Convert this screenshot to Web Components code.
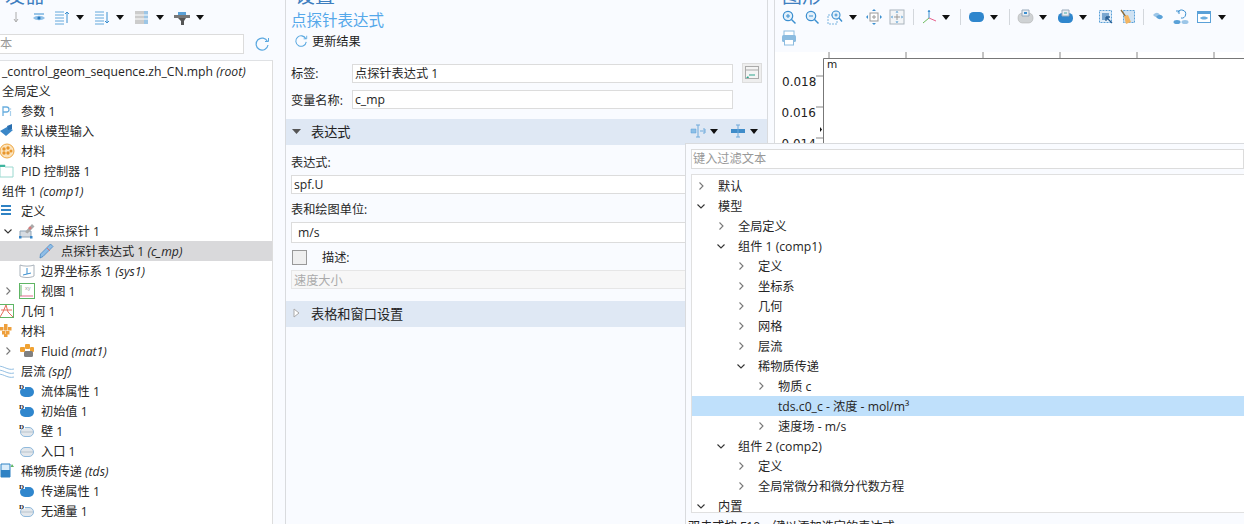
<!DOCTYPE html>
<html><head><meta charset="utf-8">
<style>
html,body{margin:0;padding:0;width:1244px;height:524px;overflow:hidden;background:#fff}
body{font:12.2px "Open Sans","Noto Sans CJK SC",sans-serif;color:#262626}
</style></head><body>
<app-shell></app-shell>
<script>
const I={
 down:'<path d="M8 3v9M6 10l2 3 2-3" stroke="#aaa" fill="none"/>',
 eye:'<path d="M3 5h10" stroke="#3b8fd0"/><path d="M2 9c3-3 9-3 12 0-3 3-9 3-12 0z" fill="#8fc0e8"/><circle cx="8" cy="9" r="1.600" fill="#2a78bb"/>',
 listup:'<path d="M1 3h9M1 6h9M1 9h9M1 12h9M1 15h9" stroke="#62a8dc"/><path d="M13 14V3M11 5l2-2 2 2" stroke="#3b8fd0" fill="none"/>',
 listdn:'<path d="M1 3h9M1 6h9M1 9h9M1 12h9M1 15h9" stroke="#62a8dc"/><path d="M13 3v11M11 12l2 2 2-2" stroke="#3b8fd0" fill="none"/>',
 cols:'<path d="M1 2h9v13H1z" fill="#ccc"/><path d="M10 2h4v13h-4z" fill="#9dc6e6"/><path d="M1 6h13M1 10h13" stroke="#fff"/>',
 filter:'<path d="M0 6h16v3H0z" fill="#777"/><path d="M4 3h8v3H4z" fill="#5aa1d8"/><path d="M4 9h8l-2 3v4H7v-4z" fill="#555"/>',
 refresh:'<path d="M13.500 5.500A6 6 0 1 0 14 9" fill="none" stroke="#5aa8e0" stroke-width="1.200"/><path d="M11 5.500h3.500V2" fill="none" stroke="#5aa8e0"/>',
 pi:'<path d="M4 13V4h3.500a2.500 2.500 0 0 1 0 5H4" fill="none" stroke="#6aaedf" stroke-width="1.300"/><path d="M11.500 8v5" stroke="#a8cfec" stroke-width="1.200"/><circle cx="11.500" cy="6" r=".8" fill="#a8cfec"/>',
 model:'<path d="M1 8l7-4 6 3-7 6z" fill="#3b87c8"/><path d="M8 3l5-2v5l-4 1z" fill="#2a6fb0"/>',
 mat:'<circle cx="8" cy="8" r="7" fill="#fbe3bd" stroke="#f0a842"/><g fill="#e8962c"><circle cx="5" cy="6" r="1.700"/><circle cx="9" cy="5" r="1.700"/><circle cx="5" cy="10" r="1.700"/><circle cx="9" cy="10" r="1.700"/><circle cx="12" cy="8" r="1.500"/></g>',
 pid:'<path d="M1 2h5v2h8v10H1z" fill="#fff" stroke="#9ad8cf"/><path d="M1 2h5v2H1z" fill="#3fb59f"/>',
 defs:'<path d="M2 3h10M2 7h10M2 11h10" stroke="#2f82c4" stroke-width="2"/>',
 probe:'<path d="M1 8h11v6H1z" fill="#d7dce2" stroke="#8fa3b5"/><path d="M6 9l7-8 2.500 2.500-7 7z" fill="#aaa"/><circle cx="11" cy="5" r="1.500" fill="#d97a7a"/><g fill="#3b87c8"><rect y="13" width="2.500" height="2.500"/><rect x="11" y="13" width="2.500" height="2.500"/></g>',
 expr:'<path d="M1 15l3-1.500 10-10-2.500-2.500-10 10z" fill="#8fbde6" stroke="#3a7fc0" stroke-width=".7"/><path d="M8 5l3 3" stroke="#d97a7a"/>',
 sys:'<path d="M1 2c3 1.500 11 1.500 14 0v11c-3 2-11 2-14 0z" fill="#fff" stroke="#a9b2bb"/><path d="M8 5v6M8 11l-4 1M8 11l4-1" stroke="#3b8fd0"/>',
 view:'<rect x=".5" y=".5" width="15" height="15" fill="#fff" stroke="#5fb565"/><text x="6" y="7" font-size="5.500" fill="#999" font-family="Liberation Sans">xy</text><path d="M1 13h13" stroke="#e36a8e"/><path d="M2 13V2" stroke="#5fb565"/>',
 geom:'<rect x=".5" y="1.500" width="14" height="13" fill="#fff" stroke="#5fb565"/><path d="M1 14l3-5 3-7 2 7 5 5M2 7h11" fill="none" stroke="#e46f5d"/>',
 matsm:'<g fill="#ee9f3b"><rect x="1" y="4" width="3.500" height="3.500"/><rect x="5" y="4" width="3.500" height="3.500"/><rect x="9" y="4" width="3.500" height="3.500"/><rect x="3" y="8" width="3.500" height="3.500"/><rect x="7" y="8" width="3.500" height="3.500"/><rect x="5" y="1" width="3.500" height="3"/><rect x="5" y="11" width="3.500" height="3"/></g>',
 fluid:'<g fill="#f0a233"><rect x="1" y="4" width="5" height="5" rx="1"/><rect x="6" y="1" width="5" height="5" rx="1"/><rect x="11" y="4" width="4" height="5" rx="1"/></g><rect x="5" y="8" width="9" height="6" rx="1.500" fill="#808080"/>',
 flow:'<path d="M-2 4c5-3 10 4 17 2M-2 8c5-3 10 4 17 2M-2 12c5-3 10 4 17 2" fill="none" stroke="#93bfe2"/>',
 dblue:'<rect x="1" y="4" width="14" height="10" rx="5" fill="#2f86cd"/><rect x="0" y="0" width="6" height="6" fill="#fff"/><text x="0" y="6" font-size="7" font-weight="700" fill="#222" font-family="Liberation Serif">D</text>',
 dpale:'<rect x="1.500" y="4.500" width="13" height="9" rx="4.500" fill="#e2e7ec" stroke="#8fb9dc"/><path d="M2 9h12" stroke="#b8c3cc"/><rect x="0" y="0" width="6" height="6" fill="#fff"/><text x="0" y="6" font-size="7" font-weight="700" fill="#222" font-family="Liberation Serif">D</text>',
 pale:'<rect x="1.500" y="4.500" width="13" height="9" rx="4.500" fill="#e2e7ec" stroke="#8fb9dc"/><path d="M2 9h12" stroke="#b8c3cc"/>',
 tds:'<path d="M2 1h9v13H2z" fill="#d9ecfa" stroke="#2f82c4"/><path d="M2 7h9v7H2z" fill="#2f82c4"/><circle cx="0" cy="14" r="1.200" fill="#f0a233"/><path d="M13 1l2 3h-3.500z" fill="#5fb565"/>',
 form:'<rect x="1.500" y="1.500" width="13" height="12" fill="#f4f4f4" stroke="#aaa"/><path d="M2 5h12" stroke="#aaa"/><path d="M5 10h6" stroke="#2ca58d"/><path d="M2 13l2-2 1 2z" fill="#2ca58d"/>',
 zin:'<circle cx="7" cy="7" r="4.700" fill="#e4f1fb" stroke="#3b8fd0" stroke-width="1.200"/><path d="M5 7h4M7 5v4" stroke="#3b8fd0"/><path d="M10.500 10.500l4 4" stroke="#3b8fd0" stroke-width="1.500"/>',
 zout:'<circle cx="7" cy="7" r="4.700" fill="#e4f1fb" stroke="#3b8fd0" stroke-width="1.200"/><path d="M5 7h4" stroke="#3b8fd0"/><path d="M10.500 10.500l4 4" stroke="#3b8fd0" stroke-width="1.500"/>',
 zbox:'<path d="M1 6h9v9H1z" fill="none" stroke="#7db5e0" stroke-dasharray="2 1"/><circle cx="9" cy="6" r="4" fill="#e4f1fb" stroke="#3b8fd0" stroke-width="1.100"/><path d="M7.500 6h3M9 4.500v3" stroke="#3b8fd0"/><path d="M12 9l3 3.500" stroke="#3b8fd0" stroke-width="1.400"/>',
 zall:'<rect x="4" y="4" width="8" height="8" fill="#fff" stroke="#999"/><path d="M6 8h4M8 6v4" stroke="#999"/><path d="M8 0l-2 2h4zM8 16l-2-2h4zM0 8l2-2v4zM16 8l-2-2v4z" fill="#3b8fd0"/>',
 zext:'<rect x="1" y="1" width="14" height="14" fill="#f3f5f7" stroke="#aab4bd"/><path d="M5 8h6M8 5v6" stroke="#999"/><path d="M8 2l-1.500 1.500h3zM8 14l-1.500-1.500h3zM2 8l1.500-1.500v3zM14 8l-1.500-1.500v3z" fill="#3b8fd0"/>',
 axes:'<path d="M8 9V1" stroke="#3b8fd0"/><path d="M8 9l7 3" stroke="#e8608c"/><path d="M8 9l-6 5" stroke="#6dbb5e"/><path d="M6.500 3L8 1l1.500 2z" fill="#3b8fd0"/>',
 pill:'<rect x="1" y="3" width="15" height="10" rx="4.500" fill="#2f86cd"/>',
 pillg:'<rect x="1" y="4" width="15" height="10" rx="4.500" fill="#cfd2d4" stroke="#aaa" stroke-width=".5"/><path d="M5 1h7v6H5z" fill="#e8edf2" stroke="#9ab"/><path d="M7 3h3v2H7z" fill="#3b8fd0"/>',
 pillb:'<rect x="1" y="4" width="15" height="10" rx="4.500" fill="#2f86cd"/><path d="M5 1h7v6H5z" fill="#e8edf2" stroke="#9ab"/><path d="M7 3h3v2H7z" fill="#9cc"/>',
 sel:'<rect x="1.500" y="1.500" width="12" height="12" fill="#e3eef8" stroke="#5aa1d8" stroke-dasharray="2 1"/><rect x="4" y="4" width="7" height="7" fill="#7aa7d0"/><path d="M8 8l6 6M8 8v4M8 8h4" stroke="#2a5f93" stroke-width="1.300"/>',
 clr:'<rect x="3.500" y="1.500" width="11" height="12" fill="#cfe2f3" stroke="#5aa1d8" stroke-dasharray="2 1"/><path d="M1 1l5 7" stroke="#8a6b3a" stroke-width="1.300"/><path d="M4 7l4-1 3 7-5 2z" fill="#f3b562"/>',
 eyes:'<path d="M3 6c3-3 5-3 7 0-2 3-4 3-7 0z" fill="#9cc6e8"/><path d="M6 8c3-3 5-3 7 0-2 3-4 3-7 0z" fill="#5aa1d8"/>',
 reset:'<path d="M5 3.500A4 4 0 1 1 8 9" fill="none" stroke="#3b8fd0"/><path d="M3 2h3v3" fill="none" stroke="#3b8fd0"/><ellipse cx="4" cy="13" rx="3.500" ry="2" fill="#5aa1d8"/><ellipse cx="12" cy="13" rx="3.500" ry="2" fill="#9cc6e8"/>',
 win:'<rect x="1.500" y="2.500" width="13" height="11" fill="#fff" stroke="#5aa1d8"/><path d="M2 4h12" stroke="#5aa1d8" stroke-width="2"/><path d="M4 9c2-2 6-2 8 0-2 2-6 2-8 0z" fill="#6badde"/>',
 print:'<rect x="3" y="1" width="10" height="5" fill="#fff" stroke="#8cbce0"/><rect x="1" y="5" width="14" height="7" rx="1.500" fill="#8cbce0"/><rect x="3.500" y="9.500" width="9" height="5.500" fill="#fff" stroke="#8cbce0"/>',
 sizeA:'<path d="M1 6h5v4H1z" fill="#8dbfe6" stroke="#5aa1d8" stroke-width=".5"/><path d="M10 8h5M13 6h2v4h-2" fill="none" stroke="#6eaadb"/><path d="M8 2v12M6 2h4M6 14h4" stroke="#6eaadb"/>',
 sizeB:'<path d="M1 6h14v4H1z" fill="#3f8cc9"/><path d="M8 2v12M6 2h4M6 14h4" stroke="#6eaadb"/>'
};
function def(name,css,html){customElements.define(name,class extends HTMLElement{
 constructor(){super();this.attachShadow({mode:'open'});}
 connectedCallback(){this.shadowRoot.innerHTML='<style>'+css+'</style>'+(typeof html=='function'?html(this):html);}
});}
def('ui-icon',':host{display:inline-flex;flex:none;width:16px;height:16px}svg{width:100%;height:100%;display:block;overflow:visible}',
 h=>`<svg viewBox="0 0 16 16">${I[h.getAttribute('n')]||''}</svg>`);
def('caret-mark',':host{display:inline-block;flex:none;width:0;height:0;border:4.500px solid transparent;border-top:5px solid #111;border-bottom:0}','');
def('tool-bar',':host{display:flex;align-items:center}','<slot></slot>');
def('tool-item',':host{display:inline-flex;align-items:center;flex:none;gap:var(--cg,6px);margin-right:var(--mr,10px)}',
 h=>`<ui-icon n="${h.getAttribute('n')}"></ui-icon>${h.hasAttribute('c')?'<caret-mark></caret-mark>':''}`);
def('tool-sep',':host{display:inline-block;flex:none;width:1px;height:16px;background:#d3d7dc;margin-left:var(--ml,8px);margin-right:var(--sr,7px)}','');
def('tree-row',`:host{display:flex;align-items:center;height:20px;white-space:nowrap;color:inherit}
:host([sel]){background:var(--selbg,#d9d9db)}
.tw{width:20px;flex:none;display:flex;justify-content:center;margin-right:var(--tg,0px)}
.ic{width:23px;box-sizing:border-box;padding-left:1px;flex:none;display:flex}
svg{width:8px;height:8px}`,
 h=>{const l=+h.getAttribute('l')||0,t=h.getAttribute('t'),n=h.getAttribute('n'),off=parseFloat(h.getAttribute('o')||getComputedStyle(h).getPropertyValue('--off'))||0;
 const tw=t?`<svg viewBox="0 0 8 8"><path d="${t=='o'?'M0.500 2.500L4 6l3.500-3.500':'M2.500 0.500L6 4 2.500 7.500'}" fill="none" stroke="${t=='o'?'#333':'#777'}" stroke-width="1.100"/></svg>`:'';
 return `<span style="width:0;margin-left:${l*20+off}px;flex:none"></span><span class="tw">${tw}</span>${n?`<span class="ic"><ui-icon n="${n}"></ui-icon></span>`:''}<span><slot></slot></span>`;});
def('text-field',`:host{display:block;box-sizing:border-box;height:var(--h,19px);background:#fff;border:1px solid #dcdcdc;padding-left:var(--pl,2px);line-height:calc(var(--h,19px) - 2px);white-space:nowrap;overflow:hidden}
:host([dis]){background:#f7f7f7;color:#aaa;border-color:#e6e6e6;line-height:19px}`,'<slot></slot>');
def('section-bar',`:host{display:flex;align-items:center;box-sizing:border-box;height:26px;background:#dfe8f4;color:#222;font-size:13.200px;padding:0 0 2px 6px;flex:none}
.a{width:19px;flex:none;display:flex}
span.t{flex:1}`,
 h=>`<span class="a"><svg width="10" height="10" viewBox="0 0 10 10">${h.getAttribute('s')=='o'?'<path d="M0 3h9L4.500 8z" fill="#555"/>':'<path d="M2 1l5 4-5 4z" fill="#fff" stroke="#aaa"/>'}</svg></span><span class="t"><slot></slot></span><slot name="r"></slot>`);
const H='margin:-15px 0 0 0;font:400 20px "Noto Sans CJK SC",sans-serif;color:#3f7fbf;height:20px;line-height:20px;overflow:hidden;white-space:nowrap;flex:none;';
def('tree-panel',`:host{display:flex;flex-direction:column;width:273px;flex:none;background:#f9fbff;overflow:hidden}
h2{${H}padding-left:5px}
tool-bar{height:24px;padding-left:8px;flex:none}
.search{display:flex;align-items:center;height:20px;margin-top:5px;flex:none}
.search text-field{width:244px;border-left:0;--pl:0px;color:#999;--h:20px}
.search ui-icon{margin-left:10px}
.tree{flex:1;background:#fff;margin-top:6px;border-top:1px solid #dfe1e4;border-right:1px solid #ddd;--off:-18px}`,
 `<h2>发器</h2>
 <tool-bar><tool-item n="down" style="--mr:7px"></tool-item><tool-item n="eye" style="--mr:7px"></tool-item><tool-item n="listup" c></tool-item><tool-item n="listdn" c></tool-item><tool-item n="cols" c></tool-item><tool-item n="filter" c></tool-item></tool-bar>
 <div class="search"><text-field>本</text-field><ui-icon n="refresh"></ui-icon></div>
 <div class="tree"><slot></slot></div>`);
def('settings-panel',`:host{display:flex;flex-direction:column;width:483px;flex:none;background:#f9fbff;border-left:1px solid #d9dbde;border-right:1px solid #d9dbde;box-sizing:border-box;overflow:hidden}
h2{${H}padding-left:9px}
h3{margin:4px 0 0;padding-left:5px;font:400 15.500px "Noto Sans CJK SC",sans-serif;color:#55a8ea;height:20px;line-height:20px;flex:none}
.upd{display:flex;align-items:center;gap:4px;height:20px;margin-top:2px;padding-left:8px;color:#222;flex:none}
.upd ui-icon{width:14px;height:14px}
.r{display:grid;grid-template-columns:61px 381px 1fr;align-items:center;padding-left:5px;margin-top:7px;flex:none}
.r1{margin-top:12px}
.r ui-icon{margin-left:9px;width:20px;height:20px;background:#eee;border:1px solid #ddd;box-sizing:border-box;padding:1px}
.lab{padding-left:5px;height:20px;line-height:22px;flex:none}
.f{margin:3px 0 0 5px;--h:19px;flex:none}
.rt{display:flex;gap:12px;padding-right:9px;align-items:center}
.rt tool-item{--mr:0px;--cg:4px}
.cb{display:flex;align-items:center;padding-left:6px;height:20px;margin-top:4px;flex:none}
.cb span.b{width:13px;height:13px;background:#efefef;border:1px solid #999;margin-right:15px}`,
 `<h2>设置</h2><h3>点探针表达式</h3>
 <div class="upd"><ui-icon n="refresh"></ui-icon><span>更新结果</span></div>
 <div class="r r1"><span>标签:</span><text-field>点探针表达式 1</text-field><ui-icon n="form"></ui-icon></div>
 <div class="r"><span>变量名称:</span><text-field>c_mp</text-field></div>
 <section-bar s="o" style="margin-top:10px">表达式<span slot="r" class="rt"><tool-item n="sizeA" c></tool-item><tool-item n="sizeB" c></tool-item></span></section-bar>
 <div class="lab" style="margin-top:7px">表达式:</div>
 <text-field class="f">spf.U</text-field>
 <div class="lab" style="margin-top:5px">表和绘图单位:</div>
 <text-field class="f" style="--pl:6px;--h:21px">m/s</text-field>
 <div class="cb"><span class="b"></span><span>描述:</span></div>
 <text-field class="f" dis>速度大小</text-field>
 <section-bar s="c" style="margin-top:12px">表格和窗口设置</section-bar>
 <slot></slot>`);
def('plot-view',`:host{display:block;flex:1;background:#fff;overflow:hidden}svg{display:block}`,
 `<svg width="469" height="100" viewBox="775 52 469 100" font-family="DejaVu Sans" fill="#222">
 <path d="M829 52v6M906 52v6M983 52v6M1060 52v6M1137 52v6M1214 52v6M816 76h7M816 107h7M816 138h7" stroke="#888"/>
 <path d="M823.500 143V58.500H1244" fill="none" stroke="#777"/>
 <text x="827" y="68" font-size="10.500">m</text>
 <text x="782" y="86" font-size="12">0.018</text><text x="781.500" y="117" font-size="12">0.016</text><text x="781.500" y="148" font-size="12">0.014</text>
 <path d="M820 127v5l2-2.500z" fill="#111"/></svg>`);
def('graph-panel',`:host{display:flex;flex-direction:column;flex:1;min-width:0;border-left:1px solid #d9dbde;overflow:hidden}
h2{${H}padding-left:7px;background:#f9fbff}
.tb{background:#f9fbff;height:47px;padding-left:6px;flex:none}
.l{display:flex;align-items:center;height:24px;--mr:7px;white-space:nowrap;overflow:hidden}
.l2{height:18px}`,
 `<h2>图形</h2><div class="tb"><div class="l">
 <tool-item n="zin"></tool-item><tool-item n="zout"></tool-item><tool-item n="zbox" c style="--mr:9px"></tool-item><tool-item n="zall"></tool-item><tool-item n="zext" style="--mr:0px"></tool-item><tool-sep></tool-sep><tool-item n="axes" c style="--cg:5px;--mr:10px"></tool-item><tool-sep style="--ml:0px"></tool-sep><tool-item n="pill" c style="--mr:11px"></tool-item><tool-sep style="--ml:0px"></tool-sep><tool-item n="pillg" c style="--mr:10px"></tool-item><tool-item n="pillb" c style="--mr:11px"></tool-item><tool-item n="sel" style="--mr:6px"></tool-item><tool-item n="clr" style="--mr:0px"></tool-item><tool-sep style="--ml:7px;--sr:6px"></tool-sep><tool-item n="eyes"></tool-item><tool-item n="reset"></tool-item><tool-item n="win" c></tool-item></div>
 <div class="l l2"><tool-item n="print"></tool-item></div></div><plot-view></plot-view>`);
def('expr-popup',`:host{position:absolute;left:685px;top:143px;right:0;bottom:0;background:#f9fbff;border:1px solid #d9dbde;border-right:0;border-bottom:0;display:flex;flex-direction:column;box-sizing:border-box;overflow:hidden}
text-field{margin:5px 0 0 5px;--h:20px;--pl:1px;color:#999;flex:none}
.t{flex:none;height:339px;margin:5px 0 0 5px;padding-top:1px;background:#fff;border:1px solid #e0e0e0;border-right:0;box-sizing:border-box;--selbg:#bfe0fb;overflow:hidden;--off:-1px;--tg:7px}
.s{flex:none;height:14px;margin-top:7px;padding-left:2px;line-height:14px;white-space:nowrap;color:#222}
.s b{display:inline-block;width:33px;font-weight:400}`,
 `<text-field>键入过滤文本</text-field><div class="t"><slot></slot></div><div class="s">双击或按 <b>F10</b>键以添加选定的表达式</div>`);
def('app-shell',`:host{display:block;position:relative;width:1244px;height:524px;overflow:hidden}
.m{display:flex;width:100%;height:100%;align-items:stretch}
.g1{width:12px;flex:none;background:#f9fbff}
.g2{width:6px;flex:none;background:#f9fbff}`,
 `<div class="m"><tree-panel>
 <tree-row>_control_geom_sequence.zh_CN.mph <i>(root)</i></tree-row>
 <tree-row>全局定义</tree-row>
 <tree-row o="-22" n="pi">参数 1</tree-row>
 <tree-row o="-22" n="model">默认模型输入</tree-row>
 <tree-row o="-22" n="mat">材料</tree-row>
 <tree-row o="-22" n="pid">PID 控制器 1</tree-row>
 <tree-row>组件 1 <i>(comp1)</i></tree-row>
 <tree-row o="-22" n="defs">定义</tree-row>
 <tree-row o="-2" t="o" n="probe">域点探针 1</tree-row>
 <tree-row sel o="18" n="expr">点探针表达式 1 <i>(c_mp)</i></tree-row>
 <tree-row o="-2" n="sys">边界坐标系 1 <i>(sys1)</i></tree-row>
 <tree-row o="-2" t="c" n="view">视图 1</tree-row>
 <tree-row o="-22" n="geom">几何 1</tree-row>
 <tree-row o="-22" n="matsm">材料</tree-row>
 <tree-row o="-2" t="c" n="fluid">Fluid <i>(mat1)</i></tree-row>
 <tree-row o="-22" n="flow">层流 <i>(spf)</i></tree-row>
 <tree-row o="-2" n="dblue">流体属性 1</tree-row>
 <tree-row o="-2" n="dblue">初始值 1</tree-row>
 <tree-row o="-2" n="dpale">壁 1</tree-row>
 <tree-row o="-2" n="pale">入口 1</tree-row>
 <tree-row o="-22" n="tds">稀物质传递 <i>(tds)</i></tree-row>
 <tree-row o="-2" n="dblue">传递属性 1</tree-row>
 <tree-row o="-2" n="dpale">无通量 1</tree-row>
 </tree-panel><div class="g1"></div><settings-panel></settings-panel><div class="g2"></div><graph-panel></graph-panel></div>
 <expr-popup>
 <tree-row t="c">默认</tree-row><tree-row t="o">模型</tree-row>
 <tree-row l="1" t="c">全局定义</tree-row><tree-row l="1" t="o">组件 1 (comp1)</tree-row>
 <tree-row l="2" t="c">定义</tree-row><tree-row l="2" t="c">坐标系</tree-row><tree-row l="2" t="c">几何</tree-row><tree-row l="2" t="c">网格</tree-row><tree-row l="2" t="c">层流</tree-row><tree-row l="2" t="o">稀物质传递</tree-row>
 <tree-row l="3" t="c">物质 c</tree-row><tree-row l="3" sel>tds.c0_c - 浓度 - mol/m³</tree-row><tree-row l="3" t="c">速度场 - m/s</tree-row>
 <tree-row l="1" t="o">组件 2 (comp2)</tree-row><tree-row l="2" t="c">定义</tree-row><tree-row l="2" t="c">全局常微分和微分代数方程</tree-row><tree-row t="o">内置</tree-row>
 </expr-popup>`);
</script></body></html>
